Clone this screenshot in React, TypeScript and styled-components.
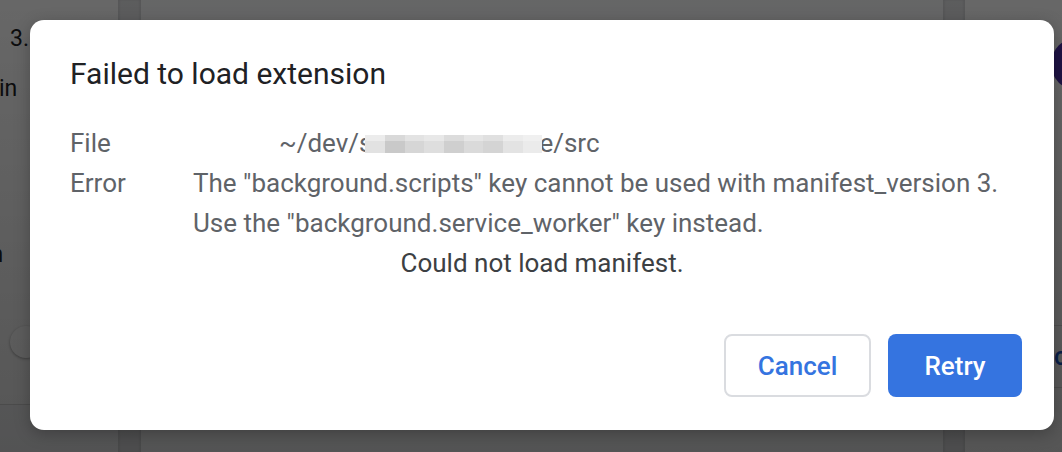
import React from "react";
import styled, { createGlobalStyle } from "styled-components";

const Global = createGlobalStyle`
  html, body { margin: 0; padding: 0; }
  body {
    width: 1062px;
    height: 452px;
    overflow: hidden;
    font-family: Roboto, "Liberation Sans", Arial, sans-serif;
    background: #eceef0;
  }
  #root { height: 100%; }
`;

const Page = styled.div`
  position: relative;
  width: 1062px;
  height: 452px;
  display: grid;
  grid-template-columns: 118px 23px 802px 22px 1fr;
  background: #f3f4f6;
  overflow: hidden;
`;

const SideCard = styled.div`
  display: flex;
  flex-direction: column;
  background: #fafafa;
  height: 405px;
  border-bottom: 1px solid #d6d6d6;
  padding-top: 26px;
  box-sizing: border-box;
`;

const Gutter = styled.div`
  background: #e0e1e3;
  box-shadow: inset 2px 0 2px rgba(0, 0, 0, 0.06), inset -2px 0 2px rgba(0, 0, 0, 0.06);
`;

const MainCard = styled.div`
  background: #f6f7f8;
`;

const BgText = styled.div<{ $indent: number; $top: number }>`
  margin-left: ${(p) => p.$indent}px;
  margin-top: ${(p) => p.$top}px;
  font-size: 23px;
  line-height: 26px;
  color: #202124;
  white-space: nowrap;
`;

const Toggle = styled.div`
  margin-left: 10px;
  margin-top: 58px;
  width: 32px;
  height: 32px;
  border-radius: 50%;
  background: #ffffff;
  box-shadow: 0 1px 3px rgba(0, 0, 0, 0.35);
`;

const RightCard = styled.div`
  display: flex;
  flex-direction: column;
  background: #fafafa;
  padding-top: 38px;
  padding-left: 86px;
`;

const Avatar = styled.div`
  width: 52px;
  height: 52px;
  border-radius: 50%;
  background: #4a2fa8;
`;

const LinkRow = styled.div`
  margin-top: 235px;
  margin-left: -86px;
  height: 61px;
  border-top: 1px solid #d8d8d8;
  border-bottom: 1px solid #d8d8d8;
  display: flex;
  align-items: center;
  padding-left: 89px;
  font-size: 25px;
  font-weight: 500;
  color: #1a56c8;
`;

const Backdrop = styled.div`
  position: absolute;
  inset: 0;
  background: linear-gradient(to bottom, rgba(0, 0, 0, 0.59), rgba(0, 0, 0, 0.66));
`;

const Dialog = styled.div`
  position: absolute;
  left: 30px;
  top: 20px;
  width: 1024px;
  height: 410px;
  box-sizing: border-box;
  background: #ffffff;
  border-radius: 14px;
  box-shadow: 0 4px 16px rgba(0, 0, 0, 0.25);
  display: flex;
  flex-direction: column;
  padding: 36px 32px 33px 40px;
`;

const Title = styled.h1`
  margin: 0;
  font-size: 30px;
  line-height: 36px;
  font-weight: 400;
  color: #202124;
`;

const Details = styled.div`
  margin-top: 31px;
  display: grid;
  grid-template-columns: 123px 1fr;
  font-size: 26px;
  line-height: 40px;
  color: #5f6368;
`;

const Label = styled.div``;

const Value = styled.div<{ $indent?: number }>`
  padding-left: ${(p) => p.$indent ?? 0}px;
  white-space: nowrap;
  display: flex;
  align-items: center;
`;

const Mosaic = styled.span`
  display: inline-grid;
  grid-template-columns: repeat(9, 1fr);
  grid-template-rows: 6px 12px;
  margin: 2px -3px 0 -7px;
  width: 177px;
  z-index: 1;
`;

const Tile = styled.span<{ $c: string }>`
  background: ${(p) => p.$c};
`;

const Summary = styled.div`
  grid-column: 1 / -1;
  text-align: center;
  color: #3c4043;
  margin-right: 8px;
`;

const Footer = styled.div`
  margin-top: auto;
  display: flex;
  justify-content: flex-end;
  gap: 17px;
`;

const Button = styled.button<{ $primary?: boolean }>`
  height: 63px;
  box-sizing: border-box;
  border-radius: 8px;
  font-family: Roboto, "Liberation Sans", Arial, sans-serif;
  font-size: 26px;
  font-weight: 500;
  cursor: pointer;
  border: ${(p) => (p.$primary ? "none" : "2px solid #dadce0")};
  background: ${(p) => (p.$primary ? "#3574e0" : "#ffffff")};
  color: ${(p) => (p.$primary ? "#ffffff" : "#3574e0")};
  width: ${(p) => (p.$primary ? "134px" : "147px")};
`;

const topRow = ["#ececec", "#d9d9d9", "#e3e3e3", "#e8e8e8", "#dcdcdc", "#e6e6e6", "#e0e0e0", "#ececec", "#f0f0f0"];
const bottomRow = ["#e2e2e2", "#c9c9c9", "#d6d6d6", "#dedede", "#cfcfcf", "#dadada", "#d4d4d4", "#e3e3e3", "#ebebeb"];

export default function App() {
  return (
    <>
      <Global />
      <Page>
        <SideCard>
          <BgText $indent={10} $top={0}>3.</BgText>
          <BgText $indent={-1} $top={24}>in</BgText>
          <BgText $indent={-15} $top={140}>in</BgText>
          <Toggle />
        </SideCard>
        <Gutter />
        <MainCard />
        <Gutter />
        <RightCard>
          <Avatar />
          <LinkRow>ca</LinkRow>
        </RightCard>
        <Backdrop />
        <Dialog role="dialog" aria-label="Failed to load extension">
          <Title>Failed to load extension</Title>
          <Details>
            <Label>File</Label>
            <Value $indent={86}>
              ~/dev/s
              <Mosaic aria-hidden="true">
                {topRow.map((c, i) => (
                  <Tile key={`t${i}`} $c={c} />
                ))}
                {bottomRow.map((c, i) => (
                  <Tile key={`b${i}`} $c={c} />
                ))}
              </Mosaic>
              e/src
            </Value>
            <Label>Error</Label>
            <Value>The "background.scripts" key cannot be used with manifest_version 3.</Value>
            <Label />
            <Value>Use the "background.service_worker" key instead.</Value>
            <Summary>Could not load manifest.</Summary>
          </Details>
          <Footer>
            <Button>Cancel</Button>
            <Button $primary>Retry</Button>
          </Footer>
        </Dialog>
      </Page>
    </>
  );
}
